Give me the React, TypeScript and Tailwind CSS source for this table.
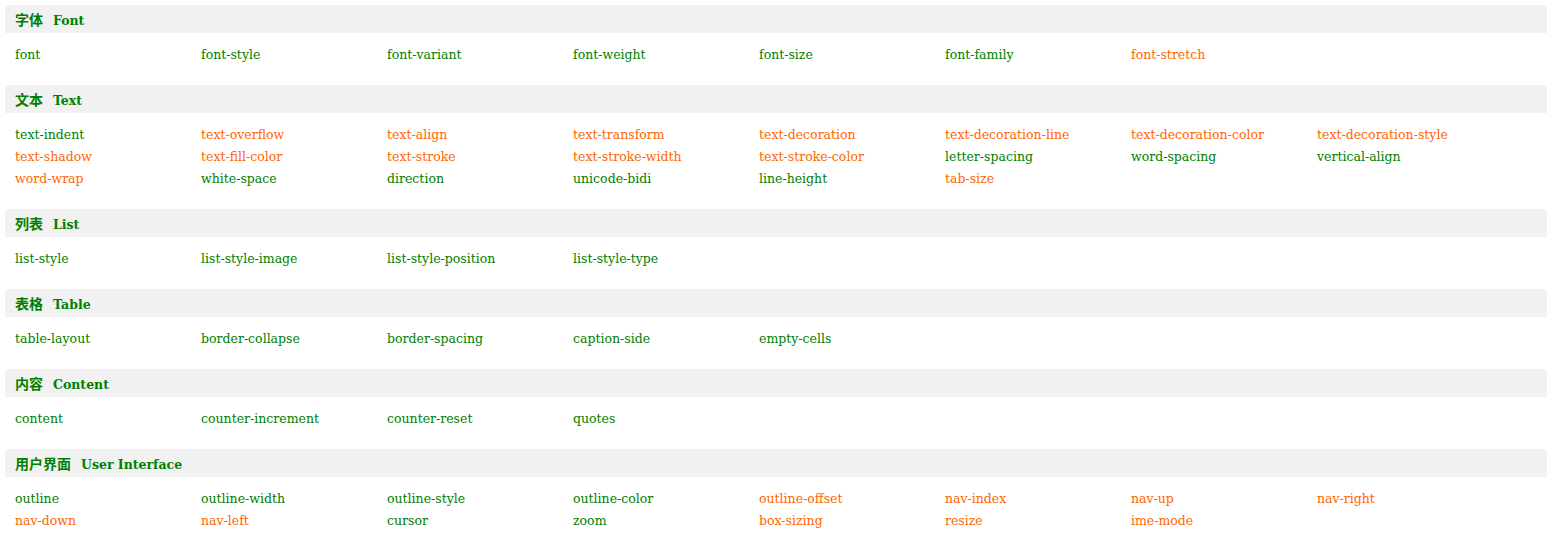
import React from 'react';

type Prop = { name: string; warn?: boolean };

interface Section {
  cn: string;
  en: string;
  items: Prop[];
}

const p = (name: string, warn = false): Prop => ({ name, warn });

const sections: Section[] = [
  {
    cn: '字体',
    en: 'Font',
    items: [
      p('font'),
      p('font-style'),
      p('font-variant'),
      p('font-weight'),
      p('font-size'),
      p('font-family'),
      p('font-stretch', true)
    ]
  },
  {
    cn: '文本',
    en: 'Text',
    items: [
      p('text-indent'),
      p('text-overflow', true),
      p('text-align', true),
      p('text-transform', true),
      p('text-decoration', true),
      p('text-decoration-line', true),
      p('text-decoration-color', true),
      p('text-decoration-style', true),
      p('text-shadow', true),
      p('text-fill-color', true),
      p('text-stroke', true),
      p('text-stroke-width', true),
      p('text-stroke-color', true),
      p('letter-spacing'),
      p('word-spacing'),
      p('vertical-align'),
      p('word-wrap', true),
      p('white-space'),
      p('direction'),
      p('unicode-bidi'),
      p('line-height'),
      p('tab-size', true)
    ]
  },
  {
    cn: '列表',
    en: 'List',
    items: [p('list-style'), p('list-style-image'), p('list-style-position'), p('list-style-type')]
  },
  {
    cn: '表格',
    en: 'Table',
    items: [
      p('table-layout'),
      p('border-collapse'),
      p('border-spacing'),
      p('caption-side'),
      p('empty-cells')
    ]
  },
  {
    cn: '内容',
    en: 'Content',
    items: [p('content'), p('counter-increment'), p('counter-reset'), p('quotes')]
  },
  {
    cn: '用户界面',
    en: 'User Interface',
    items: [
      p('outline'),
      p('outline-width'),
      p('outline-style'),
      p('outline-color'),
      p('outline-offset', true),
      p('nav-index', true),
      p('nav-up', true),
      p('nav-right', true),
      p('nav-down', true),
      p('nav-left', true),
      p('cursor'),
      p('zoom'),
      p('box-sizing', true),
      p('resize', true),
      p('ime-mode', true)
    ]
  }
];

export default function App() {
  return (
    <div className="min-h-[548px] bg-white pt-[5px] pl-[5px] font-['DejaVu_Serif','Noto_Sans_CJK_SC',serif] text-[12.5px]">
      {sections.map((section) => (
        <div key={section.en} className="pb-[19px]">
          <h2 className="h-7 overflow-hidden bg-[#f1f1f1] pl-[10px] text-[12.5px] leading-[28px] font-bold whitespace-nowrap text-[#008000]">
            <span className="font-['Noto_Sans_CJK_SC',sans-serif] text-[14px]">{section.cn}</span>
            <span className="ml-[10px]">{section.en}</span>
          </h2>
          <ul className="grid grid-cols-[repeat(8,186px)] pt-[11px] pl-[10px]">
            {section.items.map((item) => (
              <li
                key={item.name}
                className={`h-[22px] leading-[22px] ${item.warn ? 'text-[#ff6600]' : 'text-[#008000]'}`}
              >
                {item.name}
              </li>
            ))}
          </ul>
        </div>
      ))}
    </div>
  );
}
